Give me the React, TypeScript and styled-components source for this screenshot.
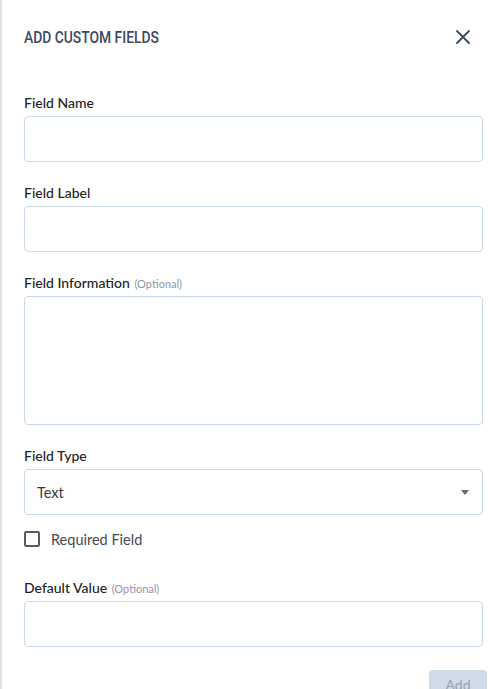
import * as React from "react";
import styled, { createGlobalStyle } from "styled-components";

const PALETTE = {
  TITLE: "#3d4961",
  LABEL: "#232323",
  MUTED: "#8d97a8",
  BORDER: "#c9d8e6",
  TEXT: "#3a3a3a",
  BTN_BG: "#cfdbe6",
  BTN_TEXT: "#93a2b4",
};

const GlobalStyle = createGlobalStyle`
  html, body {
    margin: 0;
    padding: 0;
    background: #ffffff;
  }
  body {
    font-family: Lato, "Noto Sans", sans-serif;
  }
`;

const fields = [
  { key: "name", label: "Field Name" },
  { key: "label", label: "Field Label" },
];

const App = () => {
  const [required, setRequired] = React.useState(false);

  return (
    <>
      <GlobalStyle />
      <Panel>
        <Header>
          <Title>ADD CUSTOM FIELDS</Title>
          <CloseButton aria-label="close">
            <svg width="14" height="14" viewBox="0 0 14 14">
              <path
                d="M1 1 L13 13 M13 1 L1 13"
                stroke={PALETTE.TITLE}
                strokeWidth="1.8"
                strokeLinecap="round"
              />
            </svg>
          </CloseButton>
        </Header>

        {fields.map((f) => (
          <Group key={f.key}>
            <Label>{f.label}</Label>
            <Input />
          </Group>
        ))}

        <Group>
          <Label>
            Field Information <Optional>(Optional)</Optional>
          </Label>
          <TextArea />
        </Group>

        <Group tight>
          <Label>Field Type</Label>
          <Select>
            <span>Text</span>
            <Caret />
          </Select>
        </Group>

        <CheckRow onClick={() => setRequired(!required)}>
          <CheckBox checked={required} />
          <CheckText>Required Field</CheckText>
        </CheckRow>

        <Group>
          <Label>
            Default Value <Optional>(Optional)</Optional>
          </Label>
          <Input />
        </Group>

        <Footer>
          <AddButton disabled>Add</AddButton>
        </Footer>
      </Panel>
    </>
  );
};

export default App;

const Panel = styled.div`
  box-sizing: border-box;
  width: 488px;
  min-height: 689px;
  border-left: 2px solid #e2e2e2;
  padding: 0 5px 0 22px;
  background: #ffffff;
`;

const Header = styled.div`
  display: flex;
  align-items: center;
  justify-content: space-between;
  height: 74px;
  padding-right: 13px;
  margin-bottom: 19px;
`;

const Title = styled.h1`
  margin: 0;
  font-family: Roboto, "DejaVu Sans Condensed", sans-serif;
  font-size: 16.5px;
  font-weight: 500;
  color: ${PALETTE.TITLE};
  transform: scaleX(0.84);
  transform-origin: left center;
`;

const CloseButton = styled.button`
  display: flex;
  padding: 0;
  border: none;
  background: none;
  cursor: pointer;
`;

const Group = styled.div<{ tight?: boolean }>`
  display: flex;
  flex-direction: column;
  margin-bottom: ${(p) => (p.tight ? "15px" : "21px")};
`;

const Label = styled.label`
  display: block;
  height: 19px;
  line-height: 19px;
  margin-bottom: 4px;
  font-family: Lato, "Noto Sans", sans-serif;
  font-size: 14px;
  font-weight: 500;
  color: ${PALETTE.LABEL};
`;

const Optional = styled.span`
  margin-left: 1px;
  font-size: 11px;
  font-weight: 400;
  color: ${PALETTE.MUTED};
`;

const Input = styled.input`
  box-sizing: border-box;
  width: 100%;
  height: 46px;
  border: 1px solid ${PALETTE.BORDER};
  border-radius: 4px;
  padding: 0 12px;
  outline: none;
  font-family: Lato, sans-serif;
  font-size: 14px;
`;

const TextArea = styled.textarea`
  box-sizing: border-box;
  width: 100%;
  height: 129px;
  border: 1px solid ${PALETTE.BORDER};
  border-radius: 4px;
  padding: 10px 12px;
  outline: none;
  resize: none;
  font-family: Lato, sans-serif;
  font-size: 14px;
`;

const Select = styled.div`
  box-sizing: border-box;
  display: flex;
  align-items: center;
  justify-content: space-between;
  height: 46px;
  border: 1px solid ${PALETTE.BORDER};
  border-radius: 4px;
  padding: 0 13px 0 12px;
  font-family: Lato, "Noto Sans", sans-serif;
  font-size: 14.5px;
  color: ${PALETTE.TEXT};
`;

const Caret = styled.span`
  width: 0;
  height: 0;
  border-left: 4.5px solid transparent;
  border-right: 4.5px solid transparent;
  border-top: 5px solid #6b6b6b;
`;

const CheckRow = styled.div`
  display: flex;
  align-items: center;
  gap: 11px;
  height: 18px;
  margin-bottom: 30px;
  cursor: pointer;
`;

const CheckBox = styled.span<{ checked: boolean }>`
  box-sizing: border-box;
  width: 16px;
  height: 16px;
  border: 2px solid #555b63;
  border-radius: 2px;
  background: ${(p) => (p.checked ? "#555b63" : "#fff")};
`;

const CheckText = styled.span`
  font-family: Lato, "Noto Sans", sans-serif;
  font-size: 14.5px;
  color: #444a52;
`;

const Footer = styled.div`
  display: flex;
  justify-content: flex-end;
  margin-right: -4px;
  padding-top: 2px;
`;

const AddButton = styled.button`
  width: 58px;
  height: 36px;
  border: none;
  border-radius: 4px;
  background: ${PALETTE.BTN_BG};
  color: ${PALETTE.BTN_TEXT};
  font-family: Lato, "Noto Sans", sans-serif;
  font-size: 14px;
  line-height: 24px;
  padding: 0 0 6px;
`;
